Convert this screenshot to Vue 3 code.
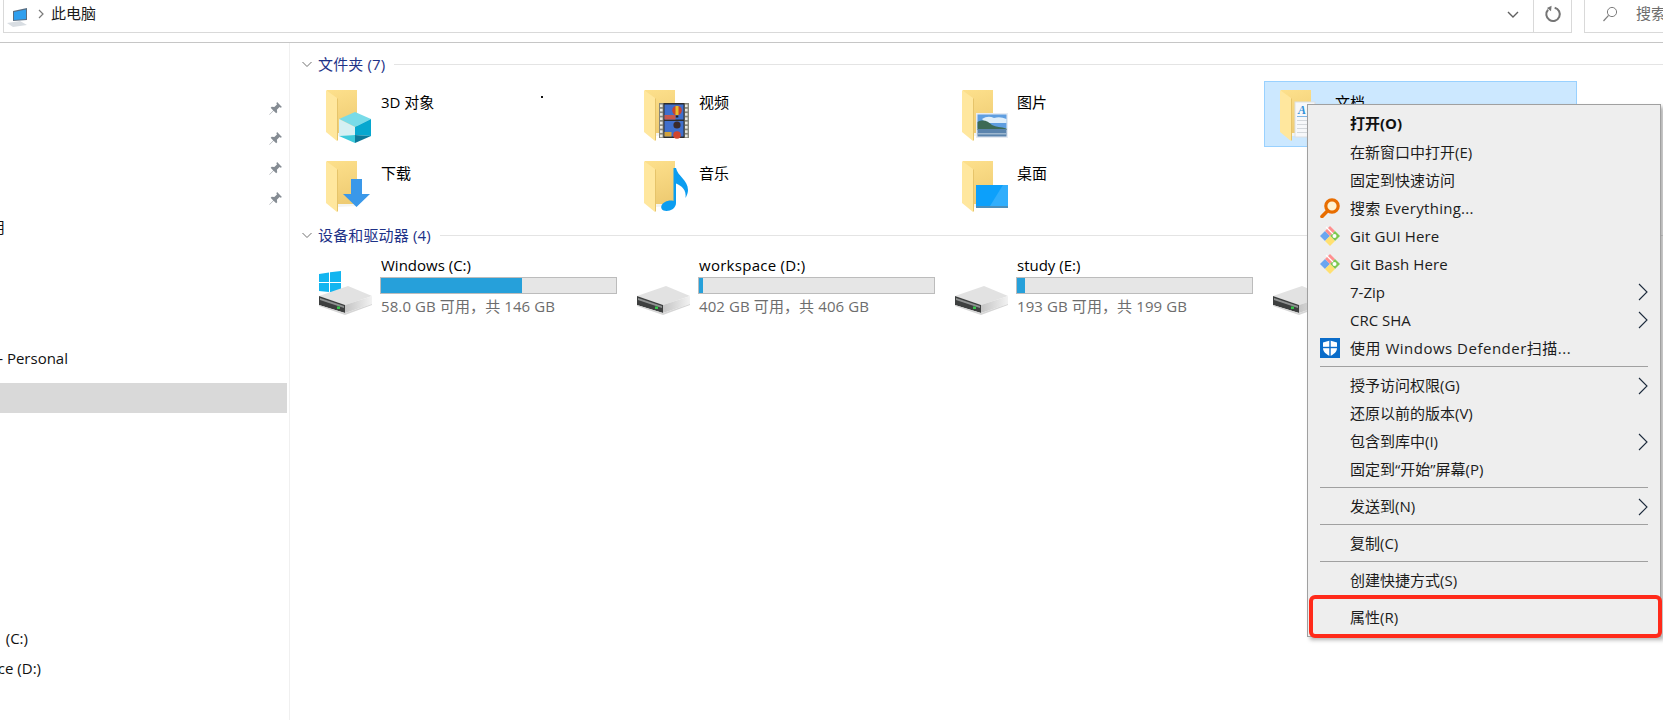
<script setup>
const sideRows = [
  { pin: true }, { pin: true }, { pin: true }, { pin: true },
  { text: '应用', end: 5, gap: 0, lift: true },
  { text: 'OneDrive - Personal', end: 68, gap: 100 },
  { text: '', selected: true, gap: 10 },
  { text: '(C:)', end: 28, gap: 211, lift: true },
  { text: 'workspace (D:)', end: 41, gap: 0, lift: true }
]
const folders = [
  { name: '3D 对象', kind: 'cube' },
  { name: '视频', kind: 'film' },
  { name: '图片', kind: 'picture' },
  { name: '文档', kind: 'doc', selected: true },
  { name: '下载', kind: 'arrow' },
  { name: '音乐', kind: 'music' },
  { name: '桌面', kind: 'desktop' }
]
const drives = [
  { name: 'Windows (C:)', used: 60, info: '58.0 GB 可用，共 146 GB', logo: true },
  { name: 'workspace (D:)', used: 1.5, info: '402 GB 可用，共 406 GB', spacing: 'loose' },
  { name: 'study (E:)', used: 3.2, info: '193 GB 可用，共 199 GB' },
  { name: '', used: 0, info: '', hidden: true }
]
const holes = [0, 1, 2, 3, 4, 5, 6, 7]
const menu = [
  { label: '打开(O)', bold: true, raised: true },
  { label: '在新窗口中打开(E)' },
  { label: '固定到快速访问' },
  { label: '搜索 Everything...', icon: 'everything', spacing: 'loose' },
  { label: 'Git GUI Here', icon: 'git', spacing: 'slight' },
  { label: 'Git Bash Here', icon: 'git', spacing: 'slight' },
  { label: '7-Zip', more: true },
  { label: 'CRC SHA', more: true },
  { label: '使用 Windows Defender扫描...', icon: 'defender', spacing: 'wide' },
  { sep: true, wide: true },
  { label: '授予访问权限(G)', more: true, raised: true },
  { label: '还原以前的版本(V)', raised: true },
  { label: '包含到库中(I)', more: true, raised: true },
  { label: '固定到“开始”屏幕(P)', raised: true },
  { sep: true },
  { label: '发送到(N)', more: true, raised: true },
  { sep: true },
  { label: '复制(C)', raised: true },
  { sep: true },
  { label: '创建快捷方式(S)', raised: true },
  { sep: true },
  { label: '属性(R)', raised: true }
]
</script>

<template>
  <div class="window">
    <header class="topbar">
      <div class="address">
        <svg class="pc" width="22" height="20" viewBox="0 0 22 20">
          <polygon points="0,16 13,14 20,18 6,20" fill="#d8dde2" />
          <polygon points="6,4 20,1 20,13 6,14" fill="#5a6d80" />
          <polygon points="7,5 19,2.4 19,12 7,13" fill="#2f9fee" />
        </svg>
        <svg class="crumb" width="6" height="10" viewBox="0 0 6 10">
          <polyline points="1,1 5,5 1,9" fill="none" stroke="#7a7a7a" stroke-width="1.2" />
        </svg>
        <span class="path">此电脑</span>
        <svg class="drop" width="12" height="8" viewBox="0 0 12 8">
          <polyline points="1,1 6,6 11,1" fill="none" stroke="#606060" stroke-width="1.4" />
        </svg>
        <div class="refresh">
          <svg width="18" height="18" viewBox="0 0 16 16">
            <path d="M9.5 2.4 A6 6 0 1 1 3.6 4.2" fill="none" stroke="#757575" stroke-width="1.8" />
            <polygon points="6.5,0.6 6.5,5.4 2.6,3" fill="#757575" transform="rotate(6 5 3)" />
          </svg>
        </div>
      </div>
      <div class="search">
        <svg width="16" height="16" viewBox="0 0 16 16">
          <circle cx="10" cy="6" r="4.6" fill="none" stroke="#7d7d7d" stroke-width="1" />
          <line x1="6.6" y1="9.4" x2="1.5" y2="15" stroke="#7d7d7d" stroke-width="1.2" />
        </svg>
        <span>搜索</span>
      </div>
    </header>

    <div class="main">
      <aside class="sidebar">
        <div
          v-for="(row, i) in sideRows"
          :key="i"
          class="side-row"
          :class="{ selected: row.selected, pinned: row.pin, lift: row.lift }"
          :style="{ marginTop: (row.gap || 0) + 'px' }"
        >
          <svg v-if="row.pin" width="15" height="15" viewBox="0 0 14 14">
            <path d="M8.5 1 L13 5.5 L11.8 6.2 L10.8 5.6 L8.3 8.1 L8.6 10.5 L7.6 11.5 L5.2 9.1 L1.5 12.8 L1.2 12.5 L4.9 8.8 L2.5 6.4 L3.5 5.4 L5.9 5.7 L8.4 3.2 L7.8 2.2 Z" fill="#858c93" />
          </svg>
          <span v-else-if="row.text" class="side-text" :style="{ width: row.end + 'px' }">{{ row.text }}</span>
        </div>
      </aside>

      <section class="content">
        <div class="group-head first">
          <svg width="10" height="7" viewBox="0 0 10 7">
            <polyline points="0.5,1 5,5.5 9.5,1" fill="none" stroke="#707070" stroke-width="1" />
          </svg>
          <span>文件夹 (7)</span>
          <i class="rule"></i>
        </div>
        <div class="tiles">
          <div v-for="f in folders" :key="f.name" class="tile" :class="{ active: f.selected }">
            <svg class="folder" width="48" height="56" viewBox="0 0 48 56">
              <defs>
                <linearGradient :id="'back' + f.kind" x1="0" y1="0" x2="0.2" y2="1">
                  <stop offset="0" stop-color="#fde08c" />
                  <stop offset="1" stop-color="#eecb72" />
                </linearGradient>
              </defs>
              <polygon points="1,0 31,0 31,43 11,43 10,46 1,42" :fill="'url(#back' + f.kind + ')'" />
              <polygon points="11,43 31,43 31,45 11,46" fill="#f4f4f0" />
              <polygon points="0,0 11,8 11,51 0,42" fill="#ffe79e" />
              <polygon points="11,8 12,9 12,50 11,51" fill="#e6c46a" />

              <g v-if="f.kind === 'cube'">
                <polygon points="29,22 45,29 29,37 13,29" fill="#78dbe8" />
                <polygon points="13,29 29,37 29,45 13,46" fill="#d5f0f3" />
                <polygon points="45,29 29,37 29,45 45,46" fill="#06a7cf" />
                <polygon points="13,46 29,45 29,53" fill="#3ccadb" />
                <polygon points="45,46 29,45 29,53" fill="#0a7899" />
              </g>
              <g v-else-if="f.kind === 'arrow'">
                <polygon points="25,18 36,18 36,33 44,33 30.5,46 17,33 25,33" fill="#3a98e9" />
              </g>
              <g v-else-if="f.kind === 'film'">
                <rect x="15" y="13" width="30" height="35" fill="#85857a" />
                <template v-for="n in holes" :key="n">
                  <rect x="16" :y="14.5 + n * 4.3" width="2.6" height="2.6" fill="#e8e8e0" />
                  <rect x="41" :y="14.5 + n * 4.3" width="2.6" height="2.6" fill="#e8e8e0" />
                </template>
                <rect x="19.5" y="13" width="21" height="35" fill="#2d2d2d" />
                <rect x="20.5" y="14.5" width="19" height="15" fill="#3f6fcc" />
                <rect x="20.5" y="31" width="19" height="15.5" fill="#3f6fcc" />
                <rect x="20.5" y="25" width="11" height="4.5" fill="#c6584e" />
                <circle cx="33" cy="20.5" r="4.8" fill="#c9422f" />
                <rect x="31.5" y="16" width="3" height="9" fill="#e3c02c" />
                <rect x="31.8" y="25.5" width="2.5" height="2" fill="#222" />
                <circle cx="33" cy="35" r="3.6" fill="#3b2a2a" />
                <rect x="20.5" y="42" width="7" height="4.5" fill="#d1a23c" />
                <circle cx="33" cy="45" r="3.8" fill="#d2452d" />
              </g>
              <g v-else-if="f.kind === 'music'">
                <path d="M29.5 7 L32 7 C33.5 15 44 19 44 29 C44 32 43 34 41.5 37 C42.5 29 38 25 32 22.5 L32 42 C32 47 27 50 22.5 50 C18 50 16.5 47 17.5 44.5 C19 41 25 38.5 29.5 40 Z" fill="#0b9df0" />
              </g>
              <g v-else-if="f.kind === 'picture'">
                <rect x="14" y="23" width="32" height="25" fill="#e6ebf2" />
                <rect x="15.5" y="24.5" width="29" height="14" fill="#5f9ee0" />
                <path d="M20 29 Q26 25 32 28 Q38 26 44.5 29 V33 H24 Z" fill="#dfeefa" />
                <path d="M15.5 32 C21 29 26 31 30 35 C34 37 39 37 44.5 38.5 V40 H15.5 Z" fill="#3d6a55" />
                <rect x="15.5" y="39" width="29" height="7.5" fill="#5b84ad" />
                <rect x="15.5" y="43" width="29" height="1.5" fill="#9db7cf" />
              </g>
              <g v-else-if="f.kind === 'desktop'">
                <rect x="14" y="24" width="32" height="23" fill="#4c8fbb" />
                <rect x="14" y="24" width="32" height="21" fill="#0ca0fb" />
                <polygon points="28,45 41,24 46,24 46,45" fill="#31aefc" />
              </g>
              <g v-else-if="f.kind === 'doc'">
                <rect x="15" y="12" width="20" height="35" fill="#f7f8fa" stroke="#dcdfe3" />
                <text x="18" y="24" class="doc-a">A</text>
                <rect x="17" y="26" width="16" height="1" fill="#7fb6e6" />
                <rect x="17" y="30" width="16" height="1" fill="#d4d8dc" />
                <rect x="17" y="34" width="16" height="1" fill="#d4d8dc" />
                <rect x="17" y="38" width="16" height="1" fill="#d4d8dc" />
                <rect x="17" y="42" width="16" height="1" fill="#d4d8dc" />
              </g>
            </svg>
            <span class="tile-name">{{ f.name }}</span>
          </div>
        </div>

        <div class="group-head second">
          <svg width="10" height="7" viewBox="0 0 10 7">
            <polyline points="0.5,1 5,5.5 9.5,1" fill="none" stroke="#707070" stroke-width="1" />
          </svg>
          <span>设备和驱动器 (4)</span>
          <i class="rule"></i>
        </div>
        <div class="tiles">
          <div v-for="(d, i) in drives" :key="i" class="drive">
            <svg class="hdd" width="60" height="46" viewBox="0 0 60 46">
              <defs>
                <linearGradient :id="'side' + i" x1="0" y1="0" x2="1" y2="0">
                  <stop offset="0" stop-color="#c4c4c4" />
                  <stop offset="1" stop-color="#f2f2f2" />
                </linearGradient>
              </defs>
              <g v-if="d.logo">
                <polygon points="1,3 11,1.4 11,11 1,11" fill="#12b5f0" />
                <polygon points="12,1.2 23,0 23,11 12,11" fill="#12b5f0" />
                <polygon points="1,12 11,12 11,21 1,20" fill="#12b5f0" />
                <polygon points="12,12 23,12 23,22 12,21" fill="#12b5f0" />
              </g>
              <polygon points="1,25 30,15 54,25 27,34" fill="#e2e2e2" />
              <polygon points="27,34 54,25 54,33 27,42" :fill="'url(#side' + i + ')'" />
              <polygon points="1,25 27,34 27,42 1,34" fill="#3d3f3f" />
              <polygon points="2,27 26,35 26,37 2,29" fill="#8e9090" />
              <rect x="19" y="35.5" width="3" height="2.5" fill="#37c24a" />
              <polygon points="1,34 27,42 54,33 54,34 27,44 1,35" fill="#d6d6d6" />
            </svg>
            <template v-if="!d.hidden">
              <span class="drive-name" :class="d.spacing">{{ d.name }}</span>
              <div class="bar"><div class="fill" :style="{ width: d.used + '%' }"></div></div>
              <span class="drive-info">{{ d.info }}</span>
            </template>
          </div>
        </div>
      </section>
    </div>

    <i class="speck"></i>

    <nav class="menu">
      <template v-for="(m, i) in menu" :key="i">
        <div v-if="m.sep" class="sep" :class="{ wide: m.wide }"></div>
        <div v-else class="item" :class="{ bold: m.bold }">
          <span class="ico">
            <svg v-if="m.icon === 'everything'" width="20" height="20" viewBox="0 0 20 20">
              <circle cx="12" cy="8" r="6.2" fill="#fff1cf" stroke="#e86d00" stroke-width="3.2" />
              <line x1="7.4" y1="13" x2="2" y2="18.4" stroke="#e86d00" stroke-width="3.6" stroke-linecap="round" />
            </svg>
            <svg v-else-if="m.icon === 'git'" width="20" height="20" viewBox="0 0 20 20">
              <polygon points="0,10 5,5 10,10 5,15" fill="#6aa6f0" />
              <polygon points="5,5 10,0 15,5 10,10" fill="#ff8f8f" />
              <polygon points="10,10 15,5 20,10 15,15" fill="#7ec850" />
              <polygon points="5,15 10,10 15,15 10,20" fill="#ffe071" />
              <line x1="6" y1="1" x2="13" y2="8" stroke="#fff" stroke-width="1.2" />
              <circle cx="14.5" cy="10" r="2" fill="#fff" />
            </svg>
            <svg v-else-if="m.icon === 'defender'" width="20" height="20" viewBox="0 0 20 20">
              <rect width="20" height="20" fill="#0a6cc9" />
              <path d="M10 2.5 L17 4.5 V10 C17 14 13.5 16.5 10 18 C6.5 16.5 3 14 3 10 V4.5 Z" fill="#fff" />
              <rect x="9.3" y="2" width="1.4" height="16" fill="#0a6cc9" />
              <rect x="3" y="8.8" width="14" height="1.4" fill="#0a6cc9" />
            </svg>
          </span>
          <span class="label" :class="[m.spacing, { raised: m.raised }]">{{ m.label }}</span>
          <svg v-if="m.more" class="more" width="10" height="18" viewBox="0 0 10 18">
            <polyline points="1,1 9,9 1,17" fill="none" stroke="#1c2a3c" stroke-width="1.1" />
          </svg>
        </div>
      </template>
    </nav>

    <div class="callout"></div>
  </div>
</template>

<style scoped>
.window {
  position: relative;
  width: 1663px;
  height: 720px;
  overflow: hidden;
  background: #fff;
  color: #000;
  font: 15px/20px "Open Sans", "Noto Sans CJK SC", sans-serif;
}
.slight { letter-spacing: 0.12px; }
.loose { letter-spacing: 0.28px; }
.wide { letter-spacing: 0.5px; }
.topbar { display: flex; height: 33px; margin-bottom: 9px; }
.address {
  display: flex;
  align-items: center;
  width: 1569px;
  margin-left: 3px;
  box-sizing: border-box;
  border: 1px solid #d9d9d9;
  border-top: 0;
}
.pc { margin-left: 3px; margin-top: 1px; }
.crumb { margin-left: 9px; margin-top: -5px; }
.path { margin-left: 7px; color: #1a1a1a; margin-top: -7px; }
.drop { margin-left: auto; margin-right: 14px; margin-top: -3px; }
.refresh {
  display: flex;
  align-items: center;
  justify-content: center;
  width: 38px;
  height: 100%;
  border-left: 1px solid #d9d9d9;
  padding-bottom: 5px;
  box-sizing: border-box;
}
.search {
  flex: 1;
  display: flex;
  align-items: center;
  margin-left: 12px;
  border-left: 1px solid #d9d9d9;
  border-bottom: 1px solid #d9d9d9;
  padding-left: 17px;
  overflow: hidden;
  white-space: nowrap;
  color: #6d6d6d;
}
.search svg { flex: none; margin-top: -5px; }
.search span { margin-left: 18px; margin-top: -7px; }
.main { display: flex; height: 677px; border-top: 1px solid #c6c6c6; }
.sidebar {
  width: 290px;
  box-sizing: border-box;
  flex: none;
  padding-top: 50px;
  border-right: 1px solid #f0f0f0;
  overflow: hidden;
}
.side-row { display: flex; align-items: center; height: 30px; width: 287px; color: #111; }
.side-row.lift .side-text { margin-top: -2px; }
.side-row.pinned { justify-content: flex-end; padding-right: 4px; box-sizing: border-box; }
.side-row.selected { background: #d9d9d9; }
.side-text { display: flex; justify-content: flex-end; white-space: nowrap; }
.content { flex: 1; min-width: 0; padding-left: 12px; }
.group-head { display: flex; align-items: center; height: 20px; color: #1e3287; }
.group-head.first { margin-top: 11px; margin-bottom: 7px; }
.group-head.second { margin-top: 7px; margin-bottom: 7px; }
.group-head span { margin-left: 6px; margin-right: 9px; white-space: nowrap; letter-spacing: 0.15px; }
.rule { flex: 1; height: 1px; background: #e4e4e4; }
.tiles {
  display: grid;
  grid-template-columns: repeat(4, 313px);
  column-gap: 5px;
  row-gap: 5px;
  margin-left: 8px;
}
.tile {
  position: relative;
  height: 66px;
  box-sizing: border-box;
  padding: 11px 0 0 71px;
}
.tile.active { background: #cce8ff; outline: 1px solid #99d1ff; outline-offset: -1px; }
.folder { position: absolute; left: 16px; top: 9px; }
.doc-a { font: italic 700 12px "Liberation Serif", serif; fill: #2d8fd8; }
.drive {
  position: relative;
  height: 66px;
  box-sizing: border-box;
  padding: 3px 0 0 70px;
  display: flex;
  flex-direction: column;
  align-items: flex-start;
}
.hdd { position: absolute; left: 8px; top: 19px; }
.drive-name { margin-left: 1px; height: 20px; white-space: nowrap; }
.bar {
  width: 237px;
  height: 17px;
  margin-top: 2px;
  box-sizing: border-box;
  background: #e6e6e6;
  border: 1px solid #bcbcbc;
}
.fill { height: 100%; background: #26a0da; }
.drive-info { margin: 2px 0 0 1px; color: #6d6d6d; white-space: nowrap; letter-spacing: 0.1px; }
.speck {
  position: absolute;
  left: 541px;
  top: 96px;
  width: 2px;
  height: 2px;
  background: #111;
}
.menu {
  position: absolute;
  left: 1307px;
  top: 104px;
  width: 354px;
  height: 533px;
  box-sizing: border-box;
  padding-top: 5px;
  background: #eeeeee;
  border: 1px solid #a0a0a0;
  box-shadow: 3px 3px 4px rgba(0, 0, 0, 0.3);
  color: #1c1c1c;
}
.item { display: flex; align-items: center; height: 28px; padding: 0 12px; }
.item.bold { font-weight: 700; color: #111; }
.ico { display: flex; width: 20px; height: 20px; margin-right: 10px; flex: none; }
.label { white-space: nowrap; }
.label.raised { margin-top: -2px; }
.more { margin-left: auto; }
.sep { height: 1px; margin: 3px 12px 5px; background: #a0a0a0; }
.sep.wide { margin-top: 4px; }
.callout {
  position: absolute;
  left: 1309px;
  top: 595px;
  width: 353px;
  height: 43px;
  box-sizing: border-box;
  border: 4px solid #ff2a1a;
  border-radius: 6px;
}
</style>

<style>
html, body { margin: 0; background: #fff; }
</style>
